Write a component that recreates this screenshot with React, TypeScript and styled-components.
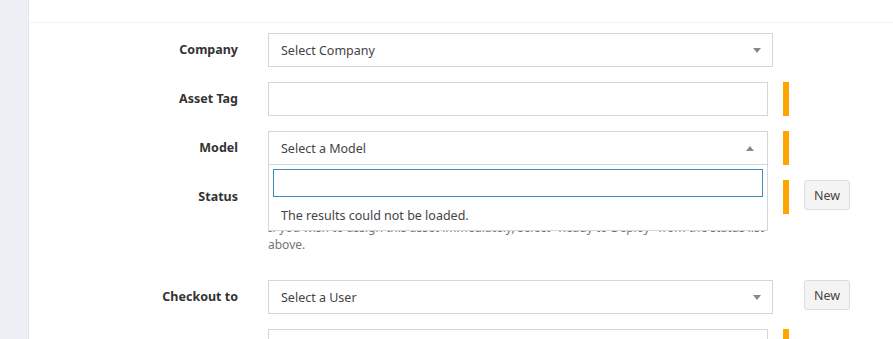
import React from "react";
import styled, { createGlobalStyle } from "styled-components";

const GlobalStyle = createGlobalStyle`
  html, body { margin: 0; padding: 0; background: #fff; }
  body {
    font-family: "Noto Sans", "Open Sans", "DejaVu Sans", sans-serif;
    font-size: 12.5px;
    color: #333;
    overflow: hidden;
  }
  * { box-sizing: border-box; }
`;

const Page = styled.div`
  display: flex;
  width: 893px;
  height: 339px;
  overflow: hidden;
`;

const Sidebar = styled.div`
  width: 29px;
  flex: none;
  background: #ecf0f5;
  border-right: 1px solid #e3e7ec;
`;

const Main = styled.div`
  flex: 1;
  display: flex;
  flex-direction: column;
  background: #fff;
`;

const BoxHeader = styled.div`
  height: 23px;
  border-bottom: 1px solid #f1f2f4;
  flex: none;
`;

const FormBody = styled.div`
  padding-top: 10px;
  display: flex;
  flex-direction: column;
`;

const Row = styled.div`
  display: flex;
  align-items: flex-start;
  margin-bottom: 15px;
`;

const Label = styled.label`
  width: 224px;
  flex: none;
  padding-right: 15px;
  margin-right: 15px;
  text-align: right;
  font-weight: 700;
  color: #333;
  line-height: 34px;
  font-size: 12.5px;
`;

const Control = styled.div`
  width: 505px;
  flex: none;
  position: relative;
  display: flex;
  flex-direction: column;
`;

const Field = styled.div<{ $required?: boolean }>`
  width: ${(p) => (p.$required ? "500px" : "505px")};
  height: 34px;
  border: 1px solid #d2d6de;
  background: #fff;
  display: flex;
  align-items: center;
  padding: 0 12px;
  color: #444;
  font-size: 12.5px;
  position: relative;
`;

const Placeholder = styled.span`
  flex: 1;
  white-space: nowrap;
`;

const Arrow = styled.span<{ $up?: boolean }>`
  width: 0;
  height: 0;
  border-left: 4px solid transparent;
  border-right: 4px solid transparent;
  ${(p) =>
    p.$up
      ? "border-bottom: 5px solid #888; margin-right: 1px;"
      : "border-top: 5px solid #888; margin-right: -1px;"}
  margin-top: 1px;
`;

const Indicator = styled.div<{ $visible?: boolean }>`
  width: 6px;
  height: 34px;
  flex: none;
  margin-left: 10px;
  margin-right: 15px;
  background: ${(p) => (p.$visible ? "#ffa500" : "transparent")};
`;

const NewButton = styled.button`
  width: 46px;
  height: 30px;
  flex: none;
  background: #f4f4f4;
  border: 1px solid #dcdcdc;
  border-radius: 3px;
  color: #444;
  font-family: inherit;
  font-size: 12.5px;
  padding: 0;
  cursor: pointer;
`;

const HelpBlock = styled.p`
  margin: 5px 0 12px 0;
  width: 512px;
  color: #737373;
  font-size: 12px;
  line-height: 17px;
`;

const Dropdown = styled.div`
  position: absolute;
  top: 33px;
  left: 0;
  width: 500px;
  background: #fff;
  border: 1px solid #d2d6de;
  z-index: 10;
  padding: 4px 4px 0 4px;
`;

const SearchInput = styled.input`
  display: block;
  width: 100%;
  height: 28px;
  border: 1px solid #3c8dbc;
  outline: none;
  padding: 0 6px;
  font-family: inherit;
  font-size: 12.5px;
`;

const Message = styled.div`
  padding: 10px 8px 5px 8px;
  color: #444;
  font-size: 12.5px;
  line-height: 18px;
`;

export default function App() {
  return (
    <>
      <GlobalStyle />
      <Page>
        <Sidebar />
        <Main>
          <BoxHeader />
          <FormBody>
            <Row>
              <Label>Company</Label>
              <Control>
                <Field>
                  <Placeholder>Select Company</Placeholder>
                  <Arrow />
                </Field>
              </Control>
            </Row>
            <Row>
              <Label>Asset Tag</Label>
              <Control>
                <Field $required />
              </Control>
              <Indicator $visible />
            </Row>
            <Row>
              <Label>Model</Label>
              <Control>
                <Field $required>
                  <Placeholder>Select a Model</Placeholder>
                  <Arrow $up />
                </Field>
                <Dropdown>
                  <SearchInput type="search" />
                  <Message>The results could not be loaded.</Message>
                </Dropdown>
              </Control>
              <Indicator $visible />
            </Row>
            <Row>
              <Label>Status</Label>
              <Control>
                <Field $required>
                  <Placeholder>Select Status</Placeholder>
                  <Arrow />
                </Field>
                <HelpBlock>
                  If you wish to assign this asset immediately, select "Ready to Deploy" from the status list above.
                </HelpBlock>
              </Control>
              <Indicator $visible />
              <NewButton>New</NewButton>
            </Row>
            <Row>
              <Label>Checkout to</Label>
              <Control>
                <Field>
                  <Placeholder>Select a User</Placeholder>
                  <Arrow />
                </Field>
              </Control>
              <Indicator />
              <NewButton>New</NewButton>
            </Row>
            <Row>
              <Label></Label>
              <Control>
                <Field $required />
              </Control>
              <Indicator $visible />
            </Row>
          </FormBody>
        </Main>
      </Page>
    </>
  );
}
